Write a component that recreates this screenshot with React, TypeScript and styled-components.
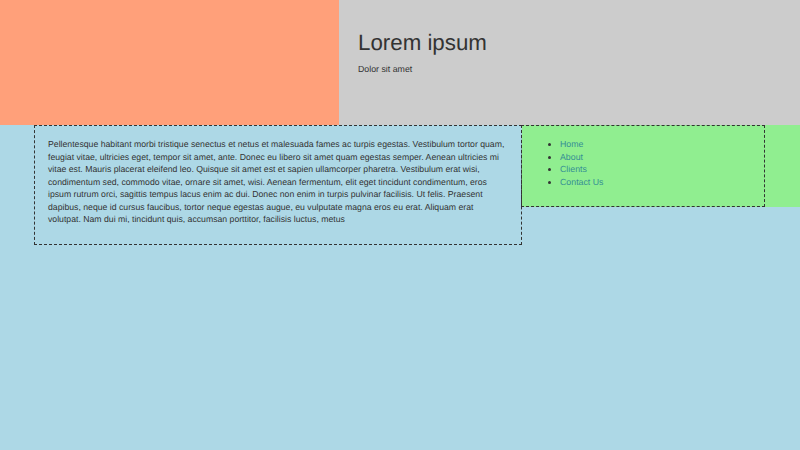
import React from "react";
import styled, { createGlobalStyle } from "styled-components";

const Global = createGlobalStyle`
  html, body { margin: 0; padding: 0; }
  body {
    background: #add8e6;
    font-family: "Liberation Sans", Arial, sans-serif;
    color: #333;
    width: 800px;
    height: 450px;
    overflow: hidden;
    text-rendering: geometricPrecision;
  }
`;

const Page = styled.div`
  display: flex;
  flex-direction: column;
  width: 800px;
  min-height: 450px;
  background: #add8e6;
`;

const Header = styled.header`
  display: flex;
  height: 125px;
`;

const Brand = styled.div`
  width: 339px;
  background: #ffa07a;
`;

const Intro = styled.div`
  flex: 1;
  background: #cccccc;
  padding: 28px 19px;
`;

const Title = styled.h1`
  margin: 0;
  font-size: 22.3px;
  font-weight: normal;
  line-height: 30px;
  color: #333;
`;

const Subtitle = styled.p`
  margin: 5px 0 0;
  font-size: 8.8px;
  line-height: 13px;
  color: #333;
`;

const Body = styled.div`
  display: flex;
  align-items: flex-start;
  padding-left: 34px;
`;

const Main = styled.main`
  width: 488px;
  box-sizing: border-box;
  border: 1px dashed #333;
  padding: 12px 13px 18px;
`;

const Text = styled.p`
  margin: 0;
  font-size: 8.7px;
  line-height: 12.5px;
  color: #333;
`;

const Aside = styled.aside`
  flex: 1;
  background: #90ee90;
`;

const Nav = styled.nav`
  width: 244px;
  box-sizing: border-box;
  border: 1px dashed #333;
  margin-left: -1px;
  padding: 12px 12px 18px;
`;

const List = styled.ul`
  margin: 0;
  padding-left: 26px;
  font-size: 8.8px;
  line-height: 12.5px;
`;

const Item = styled.li`
  color: #333;
`;

const Link = styled.a`
  color: #358f94;
  text-decoration: none;
`;

export default function App() {
  return (
    <>
      <Global />
      <Page>
        <Header>
          <Brand />
          <Intro>
            <Title>Lorem ipsum</Title>
            <Subtitle>Dolor sit amet</Subtitle>
          </Intro>
        </Header>
        <Body>
          <Main>
            <Text>
              Pellentesque habitant morbi tristique senectus et netus et malesuada fames ac turpis egestas. Vestibulum tortor quam, feugiat vitae, ultricies eget, tempor sit amet, ante. Donec eu libero sit amet quam egestas semper. Aenean ultricies mi vitae est. Mauris placerat eleifend leo. Quisque sit amet est et sapien ullamcorper pharetra. Vestibulum erat wisi, condimentum sed, commodo vitae, ornare sit amet, wisi. Aenean fermentum, elit eget tincidunt condimentum, eros ipsum rutrum orci, sagittis tempus lacus enim ac dui. Donec non enim in turpis pulvinar facilisis. Ut felis. Praesent dapibus, neque id cursus faucibus, tortor neque egestas augue, eu vulputate magna eros eu erat. Aliquam erat volutpat. Nam dui mi, tincidunt quis, accumsan porttitor, facilisis luctus, metus
            </Text>
          </Main>
          <Aside>
            <Nav>
              <List>
                <Item><Link href="#">Home</Link></Item>
                <Item><Link href="#">About</Link></Item>
                <Item><Link href="#">Clients</Link></Item>
                <Item><Link href="#">Contact Us</Link></Item>
              </List>
            </Nav>
          </Aside>
        </Body>
      </Page>
    </>
  );
}
